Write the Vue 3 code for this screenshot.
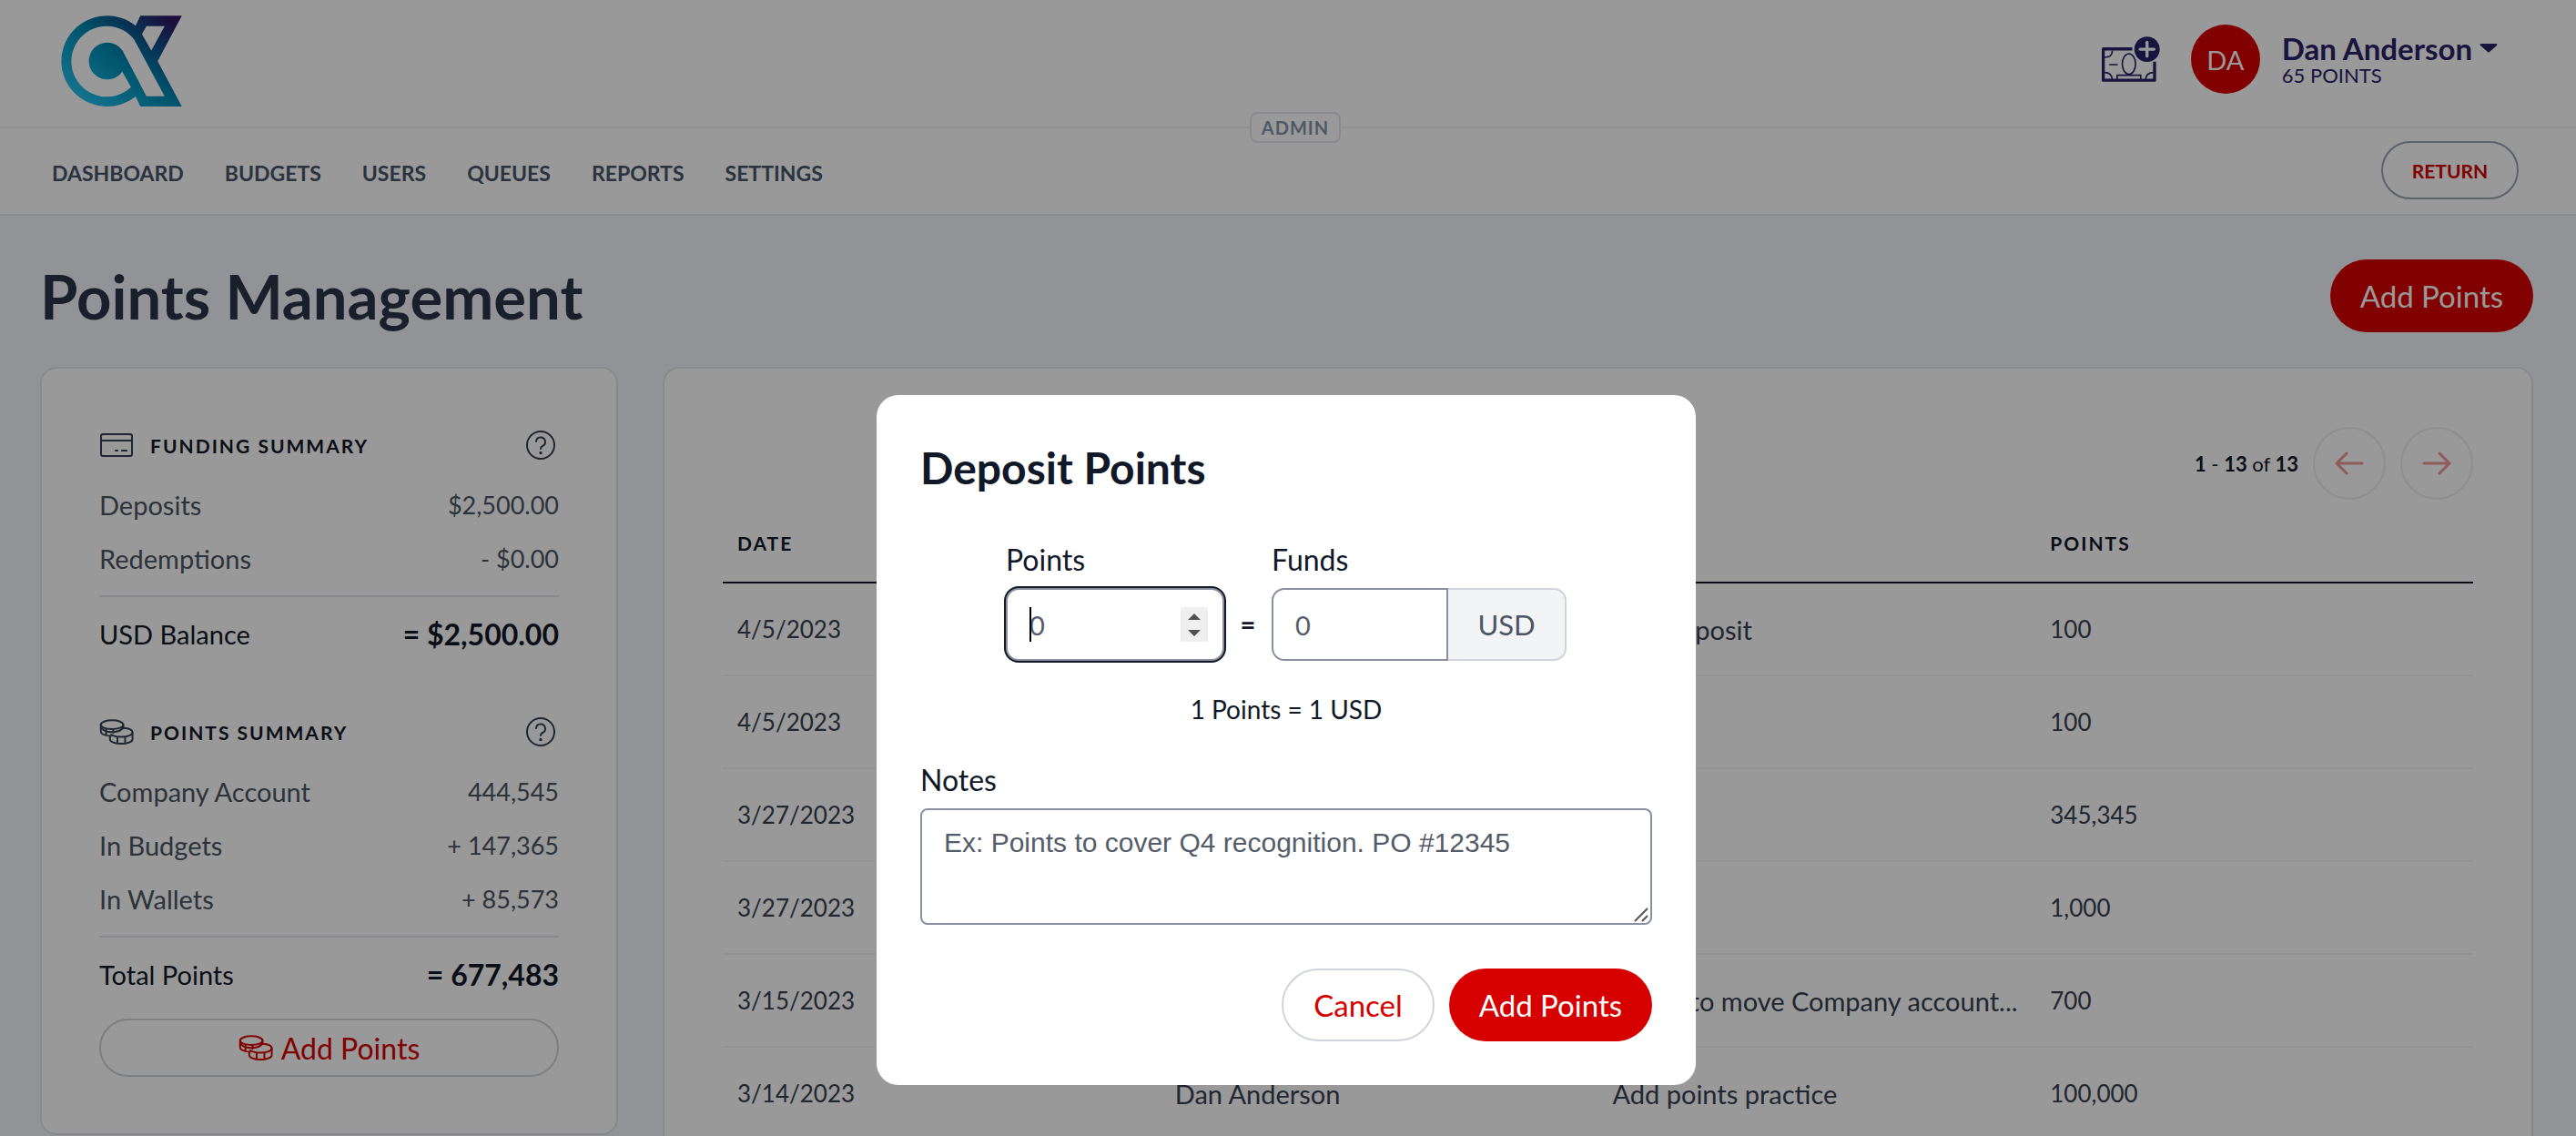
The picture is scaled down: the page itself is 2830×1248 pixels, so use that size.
<script setup>
import { ref } from 'vue'

const links = ['Dashboard', 'Budgets', 'Users', 'Queues', 'Reports', 'Settings']

const funding = [
  { label: 'Deposits', value: '$2,500.00' },
  { label: 'Redemptions', value: '- $0.00' },
]

const points = [
  { label: 'Company Account', value: '444,545' },
  { label: 'In Budgets', value: '+ 147,365' },
  { label: 'In Wallets', value: '+ 85,573' },
]

const rows = [
  { date: '4/5/2023', user: 'Dan Anderson', notes: 'Test deposit', points: '100' },
  { date: '4/5/2023', user: 'Dan Anderson', notes: 'Test', points: '100' },
  { date: '3/27/2023', user: 'Dan Anderson', notes: 'Test', points: '345,345' },
  { date: '3/27/2023', user: 'Dan Anderson', notes: 'Test', points: '1,000' },
  { date: '3/15/2023', user: 'Dan Anderson', notes: 'Trying to move Company account...', points: '700' },
  { date: '3/14/2023', user: 'Dan Anderson', notes: 'Add points practice', points: '100,000' },
]

const pointsValue = ref('')
const fundsValue = ref('')
const notes = ref('')
</script>

<template>
  <div class="page">
    <svg class="defs" aria-hidden="true">
      <symbol id="coins" viewBox="28 28 116 86">
        <g fill="none" stroke="currentColor" stroke-width="6" stroke-linecap="round">
          <ellipse cx="71" cy="47" rx="38" ry="15" />
          <path d="M33 47v22c0 9 14 15 34 16M109 47v10M51 62v20M75 64v10" />
          <path d="M109 58c19 1 31 7 31 15s-17 15-38 15c-14 0-27-3-34-8" />
          <path d="M64 86v10c0 8 17 15 38 15s38-7 38-15V73M89 90v18M115 90v18M36 60c8 9 22 12 35 12s28-4 38-14" />
        </g>
      </symbol>
      <symbol id="help" viewBox="0 0 32 32">
        <g fill="none" stroke="currentColor" stroke-width="2" stroke-linecap="round">
          <circle cx="16" cy="16" r="15" />
          <path d="M11 12a5 5 0 1 1 7 5c-1.500 .8-2 1.500-2 3" />
        </g>
        <circle cx="16" cy="24.500" r="1.700" fill="currentColor" />
      </symbol>
    </svg>

    <header class="top">
      <svg class="logo" viewBox="51 20 399 301" role="img" aria-label="Company logo">
        <defs>
          <linearGradient id="brand" x1="0.100" y1="0.800" x2="0.900" y2="0.050">
            <stop offset="0" stop-color="#20bce9" />
            <stop offset="0.450" stop-color="#008db5" />
            <stop offset="0.700" stop-color="#0b5c90" />
            <stop offset="1" stop-color="#2c1a66" />
          </linearGradient>
        </defs>
        <path
          fill="url(#brand)"
          fill-rule="evenodd"
          d="M297 54L313 21H450L370 171L450 321H313L297 288A151 150 0 1 1 297 54ZM202 55A117 117 0 1 0 282 257L253 206A61 61 0 1 1 260 148L333 287H393L292 99A117 117 0 0 0 202 55ZM333 55L318 82L349 136L393 55Z"
        />
      </svg>
      <div class="account">
        <svg class="cash" viewBox="45 33 193 150" aria-hidden="true">
          <g fill="none" stroke="currentColor">
            <path stroke-width="10" stroke-linejoin="round" d="M146 74H50V178H220V116" />
            <g stroke-width="5">
              <ellipse cx="135" cy="124" rx="22" ry="34" />
              <path d="M70 126h28M80 80c0 14-10 22-26 22M54 152c14 0 24 8 26 22M216 152c-14 0-24 8-26 22M96 176v-15h78v15" />
            </g>
          </g>
          <circle cx="195" cy="75" r="42" fill="currentColor" />
          <path class="plus" d="M195 52v46M172 75h46" />
        </svg>
        <span class="avatar">DA</span>
        <div class="who">
          <button class="name" type="button">
            Dan Anderson
            <svg viewBox="0 0 20 10" aria-hidden="true"><path d="M1 0h18q1 1 0 2l-8 7q-1 1-2 0L1 2q-1-1 0-2z" fill="currentColor" /></svg>
          </button>
          <span class="balance">65 POINTS</span>
        </div>
      </div>
      <span class="badge">ADMIN</span>
    </header>

    <nav class="nav">
      <ul>
        <li v-for="link in links" :key="link"><a href="#">{{ link }}</a></li>
      </ul>
      <button class="return" type="button">RETURN</button>
    </nav>

    <main>
      <div class="heading">
        <h1>Points Management</h1>
        <button class="btn primary" type="button">Add Points</button>
      </div>

      <div class="columns">
        <aside class="card summary">
          <section>
            <div class="title">
              <svg class="card-icon" viewBox="0 0 38 28" aria-hidden="true">
                <g fill="none" stroke="currentColor" stroke-width="2" stroke-linecap="round">
                  <rect x="2" y="2" width="34" height="24" rx="2" />
                  <path d="M2 9h34M18 20h2M25 20h5" />
                </g>
              </svg>
              <h2>FUNDING SUMMARY</h2>
              <button class="help" type="button" aria-label="About funding"><svg><use href="#help" /></svg></button>
            </div>
            <dl>
              <div v-for="item in funding" :key="item.label"><dt>{{ item.label }}</dt><dd>{{ item.value }}</dd></div>
              <div class="total"><dt>USD Balance</dt><dd>= $2,500.00</dd></div>
            </dl>
          </section>
          <section>
            <div class="title">
              <svg class="coins" aria-hidden="true"><use href="#coins" /></svg>
              <h2>POINTS SUMMARY</h2>
              <button class="help" type="button" aria-label="About points"><svg><use href="#help" /></svg></button>
            </div>
            <dl>
              <div v-for="item in points" :key="item.label"><dt>{{ item.label }}</dt><dd>{{ item.value }}</dd></div>
              <div class="total"><dt>Total Points</dt><dd>= 677,483</dd></div>
            </dl>
            <button class="wide" type="button">
              <svg class="coins" aria-hidden="true"><use href="#coins" /></svg>
              Add Points
            </button>
          </section>
        </aside>

        <section class="card history">
          <div class="pager">
            <span><b>1</b> - <b>13</b> of <b>13</b></span>
            <button type="button" disabled aria-label="Previous page">
              <svg viewBox="0 0 32 26"><path d="M30 13H2M13 2L2 13l11 11" /></svg>
            </button>
            <button type="button" disabled aria-label="Next page">
              <svg viewBox="0 0 32 26"><path d="M2 13h28M19 2l11 11-11 11" /></svg>
            </button>
          </div>
          <table>
            <thead>
              <tr><th>DATE</th><th>USER</th><th>NOTES</th><th>POINTS</th></tr>
            </thead>
            <tbody>
              <tr v-for="(row, i) in rows" :key="i">
                <td class="figure">{{ row.date }}</td>
                <td>{{ row.user }}</td>
                <td>{{ row.notes }}</td>
                <td class="figure">{{ row.points }}</td>
              </tr>
            </tbody>
          </table>
        </section>
      </div>
    </main>

    <div class="overlay">
      <form class="modal" role="dialog" aria-modal="true" aria-labelledby="deposit-title" @submit.prevent>
        <h2 id="deposit-title">Deposit Points</h2>
        <div class="convert">
          <div class="field">
            <label for="points">Points</label>
            <div class="number">
              <input id="points" v-model="pointsValue" type="number" placeholder="0" />
              <span class="caret"></span>
              <svg class="spinner" viewBox="0 0 30 38" aria-hidden="true">
                <path fill="#efefef" d="M0 0h30v38H0z" />
                <path fill="#505050" d="M15 7l7 7H8zM15 32l-7-7h14z" />
              </svg>
            </div>
          </div>
          <span class="equals">=</span>
          <div class="field">
            <label for="funds">Funds</label>
            <div class="group">
              <input id="funds" v-model="fundsValue" type="number" placeholder="0" />
              <span class="unit">USD</span>
            </div>
          </div>
        </div>
        <p class="rate">1 Points = 1 USD</p>
        <label for="notes">Notes</label>
        <div class="notes">
          <textarea id="notes" v-model="notes" placeholder="Ex: Points to cover Q4 recognition. PO #12345"></textarea>
          <svg class="grip" viewBox="0 0 16 16" aria-hidden="true"><path d="M1 15L15 1M9 15l6-6" /></svg>
        </div>
        <div class="actions">
          <button class="btn outline" type="button">Cancel</button>
          <button class="btn primary" type="submit">Add Points</button>
        </div>
      </form>
    </div>
  </div>
</template>

<style>
body {
  margin: 0;
  background: #f3f5fa;
}
</style>

<style scoped>
*,
*::before,
*::after {
  box-sizing: border-box;
}

.page {
  position: relative;
  height: 100vh;
  overflow: hidden;
  background: #f3f5fa;
  color: #111827;
  font-family: Lato, "Open Sans", sans-serif;
  font-size: 29px;
}

h1,
h2,
p,
dl,
dd,
ul {
  margin: 0;
  padding: 0;
}

button,
input {
  font: inherit;
  color: inherit;
}

button {
  padding: 0;
  border: 0;
  background: none;
  white-space: nowrap;
}

svg {
  display: block;
  flex: none;
}

.defs {
  position: absolute;
  width: 0;
  height: 0;
}

.top {
  position: relative;
  display: flex;
  align-items: flex-start;
  justify-content: space-between;
  height: 141px;
  padding: 17px 86px 0 67px;
  border-bottom: 2px solid #f0f0f2;
  background: #fff;
}

.logo {
  width: 133px;
  height: 100px;
}

.account {
  display: flex;
  align-items: center;
  padding-top: 10px;
  color: #2b2268;
}

.cash {
  width: 64px;
  height: 50px;
  margin-right: 34px;
}

.plus {
  fill: none;
  stroke: #fff;
  stroke-width: 10;
  stroke-linecap: round;
}

.avatar {
  display: grid;
  place-items: center;
  width: 76px;
  height: 76px;
  margin-right: 24px;
  border-radius: 50%;
  background: #d70000;
  color: #fff;
  font-size: 29px;
}

.who {
  display: flex;
  flex-direction: column;
  align-items: flex-start;
}

.name {
  display: flex;
  align-items: center;
  gap: 8px;
  font-size: 33px;
  font-weight: 700;
  line-height: 36px;
}

.name svg {
  width: 20px;
  height: 10px;
}

.balance {
  font-size: 22px;
  line-height: 24px;
}

.badge {
  position: absolute;
  left: 50%;
  top: 123px;
  display: grid;
  place-items: center;
  width: 100px;
  height: 34px;
  margin-left: -42px;
  border: 2px solid #e5e7eb;
  border-radius: 8px;
  background: #fff;
  color: #8295ab;
  font-size: 20px;
  font-weight: 700;
  letter-spacing: 1px;
}

.nav {
  display: flex;
  align-items: center;
  justify-content: space-between;
  height: 96px;
  padding: 0 63px 2px 57px;
  border-bottom: 2px solid #e5e7eb;
  background: #fff;
}

.nav ul {
  display: flex;
  gap: 45px;
  list-style: none;
}

.nav a {
  color: #475569;
  font-size: 23px;
  font-weight: 700;
  text-decoration: none;
  text-transform: uppercase;
}

.return {
  width: 151px;
  height: 64px;
  border: 2px solid #9ca3af;
  border-radius: 32px;
  color: #d70000;
  font-size: 21px;
  font-weight: 700;
}

main {
  padding: 48px 47px 0 44px;
}

.heading {
  display: flex;
  align-items: center;
  justify-content: space-between;
  margin-bottom: 38px;
}

h1 {
  color: #2c3648;
  font-size: 67px;
  line-height: 80px;
}

.btn {
  height: 80px;
  padding: 0 33px;
  border-radius: 40px;
  font-size: 33px;
}

.primary {
  background: #d70000;
  color: #fff;
}

.outline {
  border: 2px solid #d1d5db;
  color: #d70000;
}

.columns {
  display: flex;
  align-items: flex-start;
  gap: 49px;
}

.card {
  border: 2px solid #e5e7eb;
  border-radius: 18px;
  background: #fff;
}

.summary {
  flex: 0 0 635px;
  padding: 68px 63px 62px;
}

.summary section + section {
  margin-top: 62px;
}

.title {
  display: flex;
  align-items: center;
  height: 32px;
  margin-bottom: 20px;
  color: #374151;
}

.card-icon,
.coins {
  width: 38px;
  height: 28px;
}

.title h2 {
  flex: 1;
  margin-left: 18px;
  color: #111827;
  font-size: 21px;
  letter-spacing: 2px;
}

.help svg {
  width: 32px;
  height: 32px;
  margin-right: 4px;
}

dl div {
  display: flex;
  justify-content: space-between;
  color: #4b5563;
  line-height: 59px;
}

dd {
  font-size: 27px;
}

dl .total {
  margin-top: 11px;
  padding-top: 11px;
  border-top: 2px solid #e5e7eb;
  color: #111827;
}

.total dd {
  font-size: 32px;
  font-weight: 700;
}

.wide {
  display: flex;
  align-items: center;
  justify-content: center;
  gap: 9px;
  width: 100%;
  height: 64px;
  margin-top: 19px;
  border: 2px solid #d1d5db;
  border-radius: 32px;
  color: #d70000;
  font-size: 32px;
}

.history {
  flex: 1;
  min-width: 0;
  padding: 64px;
}

.pager {
  display: flex;
  align-items: center;
  justify-content: flex-end;
  gap: 16px;
  height: 80px;
  font-size: 22px;
}

.pager button {
  display: grid;
  place-items: center;
  width: 80px;
  height: 80px;
  border: 2px solid #d1d5db;
  border-radius: 50%;
  opacity: 0.4;
}

.pager svg {
  width: 32px;
  height: 26px;
  fill: none;
  stroke: #d70000;
  stroke-width: 3;
  stroke-linecap: round;
  stroke-linejoin: round;
}

table {
  width: 100%;
  margin-top: 4px;
  border-spacing: 0;
  table-layout: fixed;
}

th {
  height: 88px;
  padding: 0 16px;
  border-bottom: 2px solid #111827;
  font-size: 21px;
  letter-spacing: 2px;
  text-align: left;
}

td {
  height: 102px;
  padding: 0 16px;
  border-bottom: 2px solid #f3f4f6;
  color: #374151;
  white-space: nowrap;
}

.figure {
  font-size: 26px;
}

.overlay {
  position: absolute;
  inset: 0;
  display: flex;
  align-items: flex-start;
  justify-content: center;
  padding: 434px 4px 0 0;
  background: rgba(0, 0, 0, 0.4);
}

.modal {
  width: 900px;
  padding: 52px 48px 48px;
  border-radius: 24px;
  background: #fff;
  font-size: 29px;
}

.modal h2 {
  margin-bottom: 53px;
  font-size: 48px;
  line-height: 56px;
}

.modal label {
  display: block;
  margin-bottom: 11px;
  font-size: 32px;
  line-height: 40px;
}

.convert {
  display: flex;
  align-items: flex-end;
  justify-content: center;
}

.number {
  position: relative;
  width: 240px;
}

.modal input {
  display: block;
  width: 100%;
  height: 80px;
  padding: 0 24px;
  border: 2px solid #8b90a0;
  border-radius: 14px;
  outline: none;
  background: #fff;
  appearance: textfield;
}

.modal input::-webkit-inner-spin-button {
  display: none;
}

.modal input::placeholder,
.notes textarea::placeholder {
  color: #555c69;
  opacity: 1;
}

.number input {
  box-shadow: 0 0 0 2px #111827;
}

.caret {
  position: absolute;
  left: 26px;
  top: 21px;
  width: 2px;
  height: 38px;
  background: #000;
}

.spinner {
  position: absolute;
  right: 18px;
  top: 21px;
  width: 30px;
  height: 38px;
}

.equals {
  width: 52px;
  font-weight: 700;
  line-height: 80px;
  text-align: center;
}

.group {
  display: flex;
  width: 324px;
}

.group input {
  flex: 1;
  min-width: 0;
  border-radius: 14px 0 0 14px;
}

.unit {
  width: 130px;
  border: 2px solid #d1d5db;
  border-left: 0;
  border-radius: 0 14px 14px 0;
  background: #f3f4f6;
  color: #4b5563;
  font-size: 31px;
  line-height: 76px;
  text-align: center;
}

.rate {
  margin: 33px 0 38px;
  font-size: 28px;
  line-height: 40px;
  text-align: center;
}

.notes {
  position: relative;
}

.notes textarea {
  display: block;
  width: 100%;
  height: 128px;
  padding: 16px 24px;
  border: 2px solid #8b90a0;
  border-radius: 8px;
  outline: none;
  font: 30px/40px "Liberation Sans", Arial, sans-serif;
  resize: none;
}

.grip {
  position: absolute;
  right: 4px;
  bottom: 3px;
  width: 16px;
  height: 16px;
  fill: none;
  stroke: #555;
  stroke-width: 2;
}

.actions {
  display: flex;
  justify-content: flex-end;
  gap: 16px;
  margin-top: 48px;
}
</style>
